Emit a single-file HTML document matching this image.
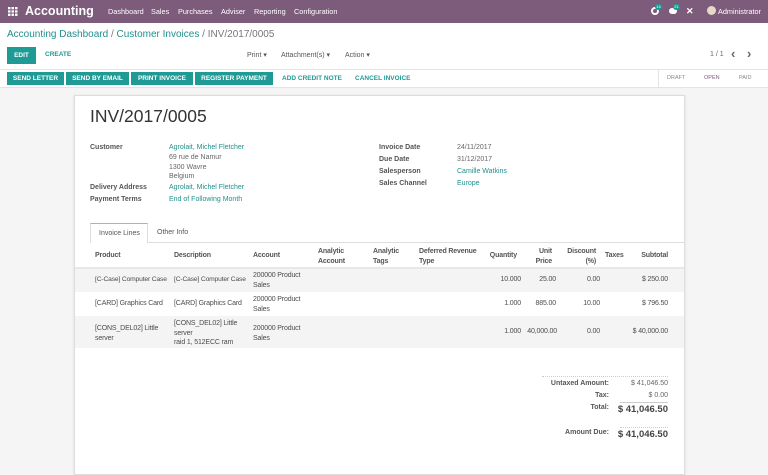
<!DOCTYPE html>
<html><head><meta charset="utf-8"><style>
*{box-sizing:border-box;margin:0;padding:0}
body{width:768px;height:465px;overflow:hidden;font-family:"Liberation Sans",sans-serif;font-size:7px;color:#4c4c4c;background:#f5f5f5;position:relative}
.a{position:absolute;white-space:nowrap}
.nav{position:absolute;left:0;top:0;width:768px;height:23px;background:#7c5b7b}
.nav .m{color:#fff;font-size:7.3px;top:7px}
.t{color:#21908c}
.btn{position:absolute;top:72px;height:13px;background:#1f9a95;color:#fff;font-size:6.5px;font-weight:bold;text-align:center;line-height:13px}
.lnk{position:absolute;top:72px;color:#1f9a95;font-size:6.5px;font-weight:bold;line-height:13px}
.lab{font-weight:bold;color:#555;font-size:7px}
.r{text-align:right}
.c{letter-spacing:-0.15px}
</style></head><body>
<div class="nav">
 <svg class="a" style="left:8px;top:7px" width="10" height="9"><g fill="#fff"><rect x="0" y="0" width="2.5" height="2.3"/><rect x="3.5" y="0" width="2.5" height="2.3"/><rect x="7" y="0" width="2.5" height="2.3"/><rect x="0" y="3.3" width="2.5" height="2.3"/><rect x="3.5" y="3.3" width="2.5" height="2.3"/><rect x="7" y="3.3" width="2.5" height="2.3"/><rect x="0" y="6.6" width="2.5" height="2.3"/><rect x="3.5" y="6.6" width="2.5" height="2.3"/><rect x="7" y="6.6" width="2.5" height="2.3"/></g></svg>
 <div class="a" style="left:25px;top:4px;color:#fff;font-size:12.5px;font-weight:bold">Accounting</div>
 <div class="a m" style="left:108px">Dashboard</div>
 <div class="a m" style="left:151px">Sales</div>
 <div class="a m" style="left:178px">Purchases</div>
 <div class="a m" style="left:221px">Adviser</div>
 <div class="a m" style="left:254px">Reporting</div>
 <div class="a m" style="left:294px">Configuration</div>
 <div class="a" style="left:651px;top:7px;width:8px;height:8px;border:2px solid #fff;border-radius:50%"></div>
 <div class="a" style="left:655px;top:4px;width:7px;height:6px;background:#1f9a95;border-radius:3px;color:#fff;font-size:4px;text-align:center">14</div>
 <div class="a" style="left:669px;top:8px;width:8px;height:6px;background:#fff;border-radius:3px"></div>
 <div class="a" style="left:673px;top:4px;width:7px;height:6px;background:#1f9a95;border-radius:3px;color:#fff;font-size:4px;text-align:center">21</div>
 <div class="a" style="left:686px;top:6px;color:#fff;font-size:9px;font-weight:bold">✕</div>
 <div class="a" style="left:707px;top:6px;width:9px;height:9px;border-radius:50%;background:#e8d8c8"></div>
 <div class="a m" style="left:718px">Administrator</div>
</div>
<div class="a" style="left:0;top:23px;width:768px;height:47px;background:#fff"></div>
<div class="a" style="left:7px;top:29px;font-size:10px;color:#21908c">Accounting Dashboard <span style="color:#777">/</span> Customer Invoices <span style="color:#777">/</span> <span style="color:#777">INV/2017/0005</span></div>
<div class="a" style="left:7px;top:47px;width:29px;height:17px;background:#1f9a95;color:#fff;font-size:6.5px;font-weight:bold;text-align:center;line-height:17px">EDIT</div>
<div class="a" style="left:45px;top:51px;font-size:6.5px;font-weight:bold;color:#1f9a95">CREATE</div>
<div class="a" style="left:247px;top:51px;font-size:7px;color:#555">Print ▾</div>
<div class="a" style="left:281px;top:51px;font-size:7px;color:#555">Attachment(s) ▾</div>
<div class="a" style="left:345px;top:51px;font-size:7px;color:#555">Action ▾</div>
<div class="a" style="left:710px;top:51px;font-size:7px;color:#666">1 / 1</div>
<div class="a" style="left:731px;top:46px;font-size:13px;font-weight:bold;color:#666">‹</div>
<div class="a" style="left:747px;top:46px;font-size:13px;font-weight:bold;color:#666">›</div>
<div class="a" style="left:0;top:69px;width:768px;height:19px;background:#fff;border-top:1px solid #e3e3e3;border-bottom:1px solid #e3e3e3"></div>
<div class="btn" style="left:7px;width:57px">SEND LETTER</div>
<div class="btn" style="left:66px;width:63px">SEND BY EMAIL</div>
<div class="btn" style="left:131px;width:62px">PRINT INVOICE</div>
<div class="btn" style="left:195px;width:78px">REGISTER PAYMENT</div>
<div class="lnk" style="left:282px">ADD CREDIT NOTE</div>
<div class="lnk" style="left:355px">CANCEL INVOICE</div>
<div class="a" style="left:658px;top:70px;width:110px;height:17px;border-left:1px solid #e3e3e3"></div>
<div class="a" style="left:667px;top:75px;font-size:5.5px;color:#888">DRAFT</div>
<div class="a" style="left:704px;top:75px;font-size:5.5px;color:#7c5b7b">OPEN</div>
<div class="a" style="left:739px;top:75px;font-size:5.5px;color:#888">PAID</div>
<div class="a" style="left:74px;top:95px;width:611px;height:380px;background:#fff;border:1px solid #ddd;box-shadow:0 1px 3px rgba(0,0,0,.1)"></div>
<div class="a" style="left:90px;top:106px;font-size:17.5px;color:#333">INV/2017/0005</div>
<div class="a lab" style="left:90px;top:144px">Customer</div>
<div class="a t" style="left:169px;top:144px">Agrolait, Michel Fletcher</div>
<div class="a" style="left:169px;top:153px;line-height:9.5px;color:#666">69 rue de Namur<br>1300 Wavre<br>Belgium</div>
<div class="a lab" style="left:90px;top:184px">Delivery Address</div>
<div class="a t" style="left:169px;top:184px">Agrolait, Michel Fletcher</div>
<div class="a lab" style="left:90px;top:196px">Payment Terms</div>
<div class="a t" style="left:169px;top:196px">End of Following Month</div>
<div class="a lab" style="left:379px;top:144px">Invoice Date</div>
<div class="a" style="left:457px;top:144px;color:#666">24/11/2017</div>
<div class="a lab" style="left:379px;top:156px">Due Date</div>
<div class="a" style="left:457px;top:156px;color:#666">31/12/2017</div>
<div class="a lab" style="left:379px;top:168px">Salesperson</div>
<div class="a t" style="left:457px;top:168px">Camille Watkins</div>
<div class="a lab" style="left:379px;top:180px">Sales Channel</div>
<div class="a t" style="left:457px;top:180px">Europe</div>
<div class="a" style="left:90px;top:242px;width:594px;border-top:1px solid #ddd"></div>
<div class="a" style="left:90px;top:223px;width:58px;height:20px;background:#fff;border:1px solid #ddd;border-bottom:none;border-top:1px solid #c9a0bf"></div>
<div class="a" style="left:99px;top:230px;font-size:7px;color:#555">Invoice Lines</div>
<div class="a" style="left:157px;top:229px;font-size:7px;color:#555">Other Info</div>
<div class="a" style="left:75px;top:267px;width:609px;border-top:2px solid #e8e8e8"></div>
<div class="a" style="left:75px;top:269px;width:609px;height:23px;background:#f4f4f4"></div>
<div class="a" style="left:75px;top:316px;width:609px;height:32px;background:#f4f4f4"></div>
<div class="a lab c" style="left:95px;top:252px">Product</div>
<div class="a lab c" style="left:174px;top:252px">Description</div>
<div class="a lab c" style="left:253px;top:252px">Account</div>
<div class="a lab c" style="left:318px;top:247px;line-height:9.5px">Analytic<br>Account</div>
<div class="a lab c" style="left:373px;top:247px;line-height:9.5px">Analytic<br>Tags</div>
<div class="a lab c" style="left:419px;top:247px;line-height:9.5px">Deferred Revenue<br>Type</div>
<div class="a lab r c" style="left:470px;width:47px;top:252px">Quantity</div>
<div class="a lab r c" style="left:520px;width:32px;top:247px;line-height:9.5px">Unit<br>Price</div>
<div class="a lab r c" style="left:560px;width:36px;top:247px;line-height:9.5px">Discount<br>(%)</div>
<div class="a lab c" style="left:605px;top:252px">Taxes</div>
<div class="a lab r c" style="left:620px;width:48px;top:252px">Subtotal</div>
<div class="a c" style="left:95px;top:276px;font-size:6.7px">[C-Case] Computer Case</div>
<div class="a c" style="left:174px;top:276px;font-size:6.7px">[C-Case] Computer Case</div>
<div class="a c" style="left:253px;top:271px;line-height:9.5px">200000 Product<br>Sales</div>
<div class="a r c" style="left:470px;width:51px;top:276px">10.000</div>
<div class="a r c" style="left:520px;width:36px;top:276px">25.00</div>
<div class="a r c" style="left:560px;width:40px;top:276px">0.00</div>
<div class="a r c" style="left:620px;width:48px;top:276px">$ 250.00</div>
<div class="a c" style="left:95px;top:300px">[CARD] Graphics Card</div>
<div class="a c" style="left:174px;top:300px">[CARD] Graphics Card</div>
<div class="a c" style="left:253px;top:295px;line-height:9.5px">200000 Product<br>Sales</div>
<div class="a r c" style="left:470px;width:51px;top:300px">1.000</div>
<div class="a r c" style="left:520px;width:36px;top:300px">885.00</div>
<div class="a r c" style="left:560px;width:40px;top:300px">10.00</div>
<div class="a r c" style="left:620px;width:48px;top:300px">$ 796.50</div>
<div class="a c" style="left:95px;top:324px;line-height:9.5px">[CONS_DEL02] Little<br>server</div>
<div class="a c" style="left:174px;top:319px;line-height:9.5px">[CONS_DEL02] Little<br>server<br>raid 1, 512ECC ram</div>
<div class="a c" style="left:253px;top:324px;line-height:9.5px">200000 Product<br>Sales</div>
<div class="a r c" style="left:470px;width:51px;top:328px">1.000</div>
<div class="a r c" style="left:520px;width:37px;top:328px">40,000.00</div>
<div class="a r c" style="left:560px;width:40px;top:328px">0.00</div>
<div class="a r c" style="left:620px;width:48px;top:328px">$ 40,000.00</div>
<div class="a" style="left:542px;top:376px;width:126px;border-top:1px dotted #ccc"></div>
<div class="a lab r" style="left:520px;width:89px;top:380px">Untaxed Amount:</div>
<div class="a r" style="left:610px;width:58px;top:380px;color:#666">$ 41,046.50</div>
<div class="a lab r" style="left:520px;width:89px;top:392px">Tax:</div>
<div class="a r" style="left:610px;width:58px;top:392px;color:#666">$ 0.00</div>
<div class="a" style="left:620px;top:402px;width:48px;border-top:1px solid #ccc"></div>
<div class="a lab r" style="left:520px;width:89px;top:404px">Total:</div>
<div class="a r" style="left:600px;width:68px;top:404px;font-size:9.5px;font-weight:bold;color:#444">$ 41,046.50</div>
<div class="a" style="left:620px;top:427px;width:48px;border-top:1px dotted #ccc"></div>
<div class="a lab r" style="left:520px;width:89px;top:429px">Amount Due:</div>
<div class="a r" style="left:600px;width:68px;top:429px;font-size:9.5px;font-weight:bold;color:#444">$ 41,046.50</div>
</body></html>
